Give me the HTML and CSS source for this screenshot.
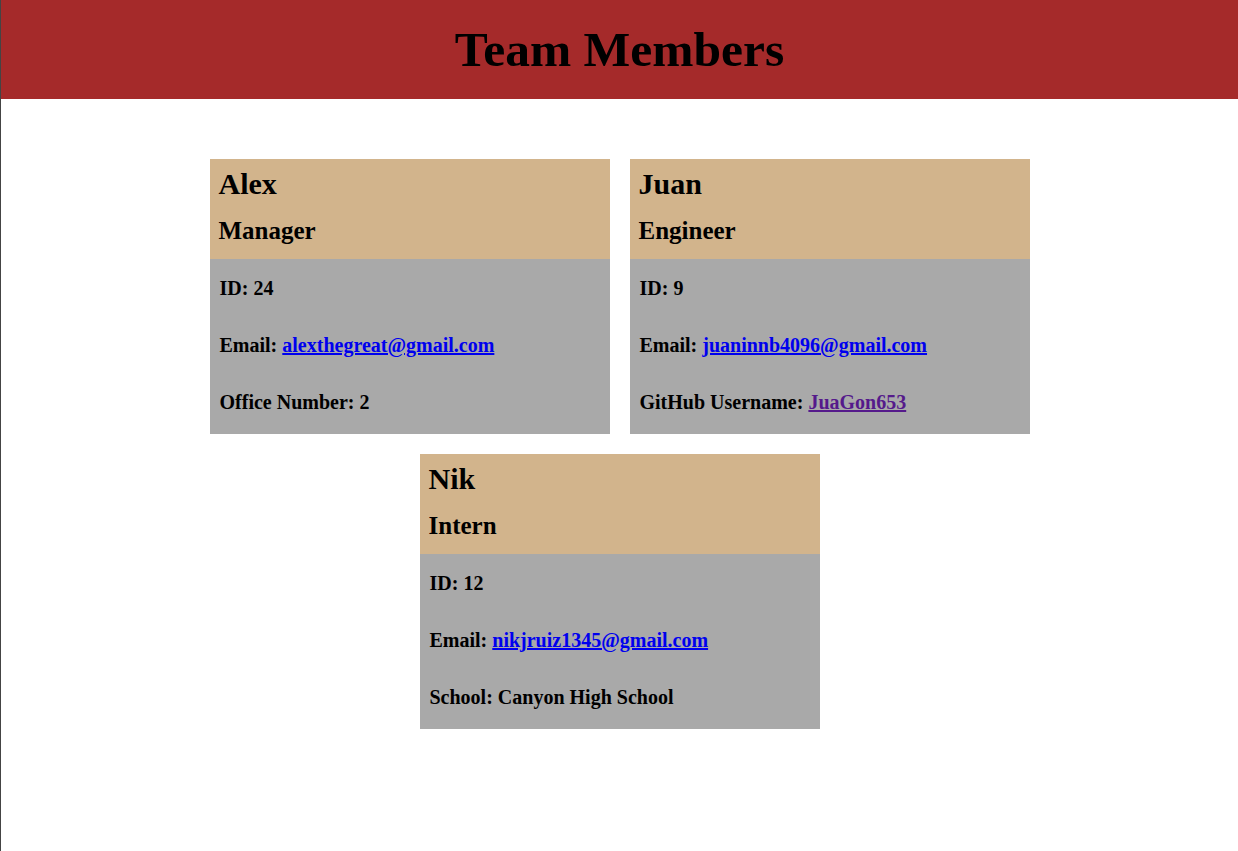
FILE: index.html
```html
<!DOCTYPE html>
<html lang="en">
<head>
<meta charset="UTF-8">
<title>Team Members</title>
<link rel="stylesheet" href="styles.css">
</head>
<body>
<header class="banner">
  <h1 class="banner-title">Team Members</h1>
</header>
<main class="team">
  <section class="card">
    <div class="card-head">
      <h2 class="card-name">Alex</h2>
      <h3 class="card-role">Manager</h3>
    </div>
    <div class="card-body">
      <p class="card-line">ID: 24</p>
      <p class="card-line">Email: <a class="link" href="#">alexthegreat@gmail.com</a></p>
      <p class="card-line">Office Number: 2</p>
    </div>
  </section>
  <section class="card">
    <div class="card-head">
      <h2 class="card-name">Juan</h2>
      <h3 class="card-role">Engineer</h3>
    </div>
    <div class="card-body">
      <p class="card-line">ID: 9</p>
      <p class="card-line">Email: <a class="link" href="#">juaninnb4096@gmail.com</a></p>
      <p class="card-line">GitHub Username: <a class="link link-visited" href="#">JuaGon653</a></p>
    </div>
  </section>
  <section class="card">
    <div class="card-head">
      <h2 class="card-name">Nik</h2>
      <h3 class="card-role">Intern</h3>
    </div>
    <div class="card-body">
      <p class="card-line">ID: 12</p>
      <p class="card-line">Email: <a class="link" href="#">nikjruiz1345@gmail.com</a></p>
      <p class="card-line">School: Canyon High School</p>
    </div>
  </section>
</main>
</body>
</html>
```
FILE: styles.css
```css
html, body {
  margin: 0;
  padding: 0;
}
body {
  font-family: "Liberation Serif", "Times New Roman", serif;
  color: #000;
  background: #fff;
  border-left: 1px solid #444;
  min-height: 100vh;
  box-sizing: border-box;
}
.banner {
  background: #a52a2a;
  height: 99px;
  display: flex;
  align-items: center;
  justify-content: center;
}
.banner-title {
  margin: 0;
  font-size: 49.5px;
  line-height: 56px;
  font-weight: bold;
}
.team {
  display: flex;
  flex-wrap: wrap;
  justify-content: center;
  padding: 50px 0 0;
  max-width: 840px;
  margin: 0 auto;
}
.card {
  width: 400px;
  margin: 10px;
}
.card-head {
  background: #d2b48c;
  padding: 8px 10px 14px 9px;
}
.card-name {
  margin: 0;
  font-size: 30px;
  line-height: 34px;
  font-weight: bold;
}
.card-role {
  margin: 15px 0 0;
  font-size: 25px;
  line-height: 29px;
  font-weight: bold;
}
.card-body {
  background: #a9a9a9;
  padding: 18px 10px 20px;
  display: flex;
  flex-direction: column;
  gap: 34px;
}
.card-line {
  margin: 0;
  font-size: 20px;
  line-height: 23px;
  font-weight: bold;
}
.link {
  color: #0000ee;
  text-decoration: underline;
}
.link-visited {
  color: #551a8b;
}
```
